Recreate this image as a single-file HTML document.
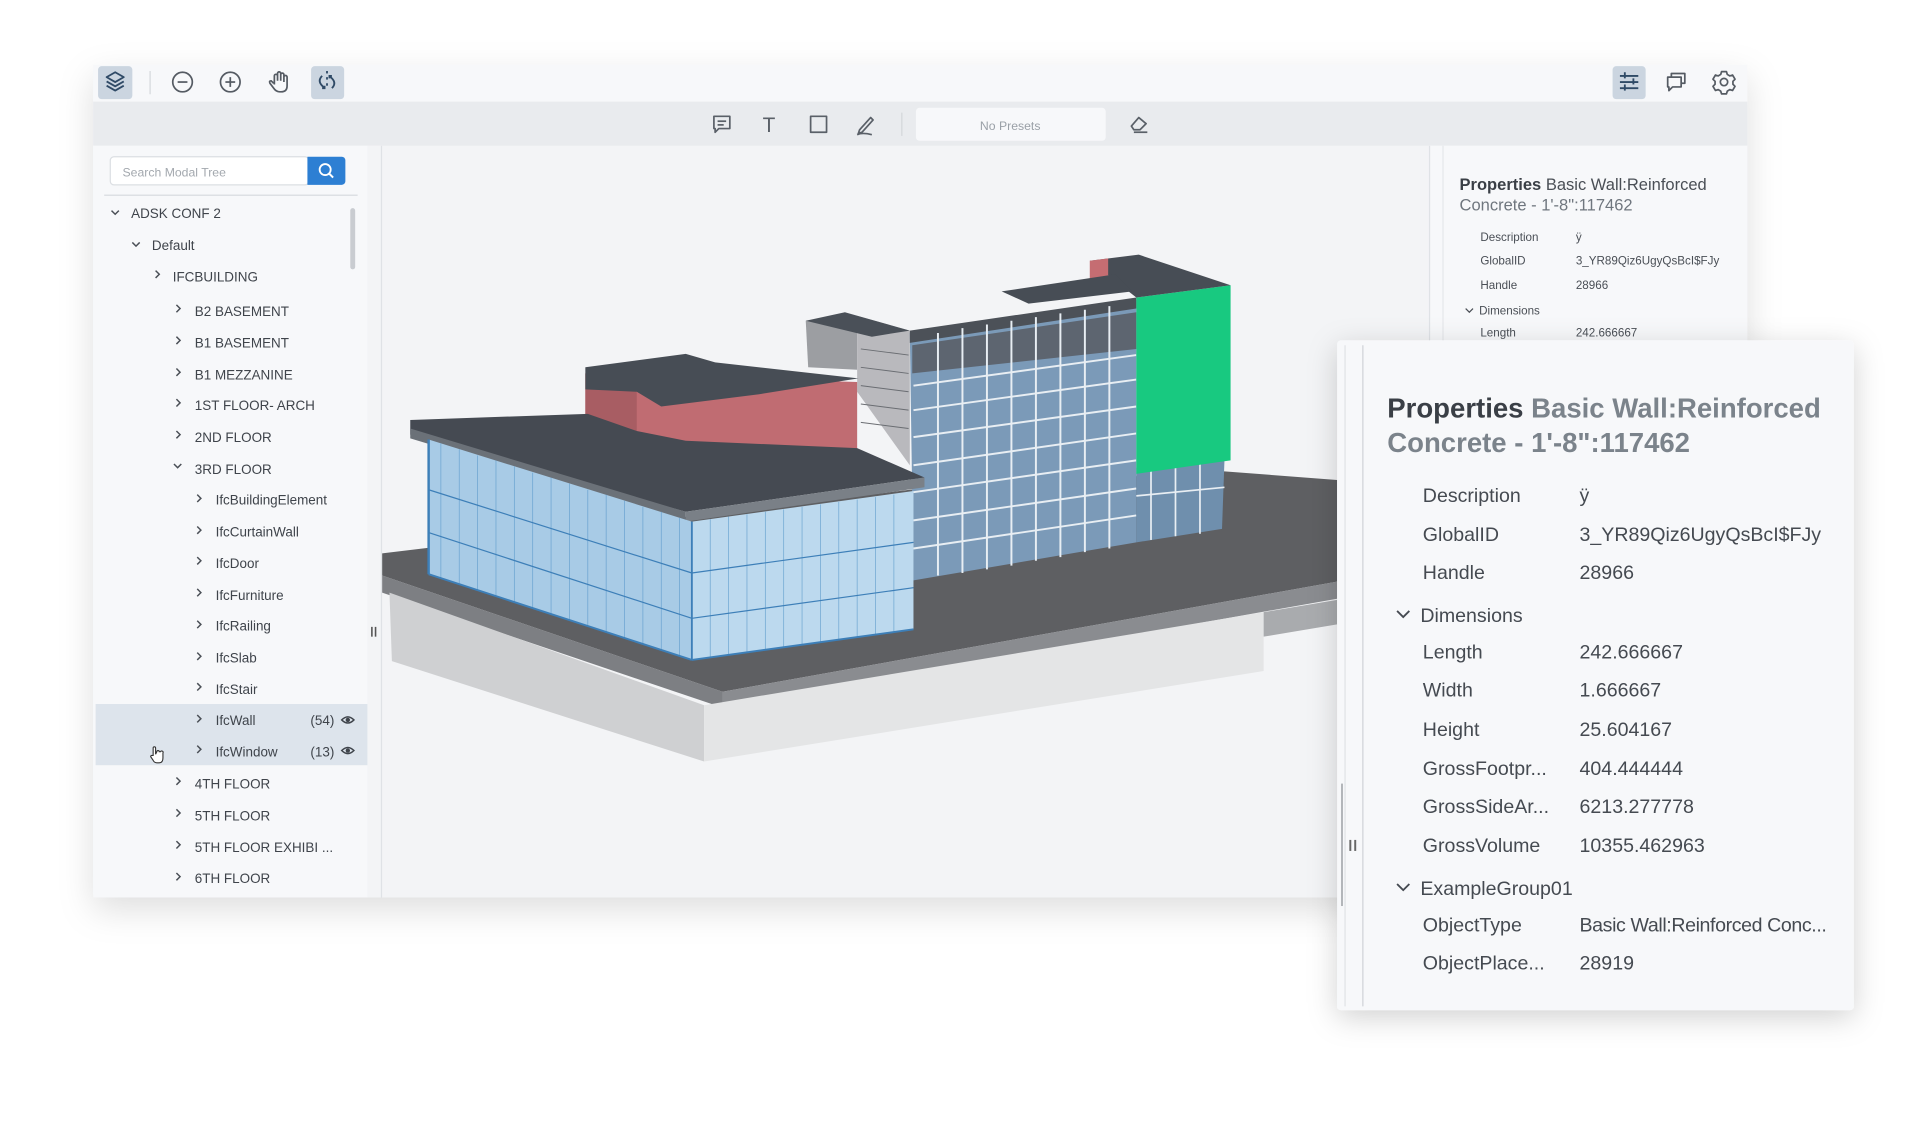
<!DOCTYPE html>
<html><head><meta charset="utf-8"><style>
html,body{margin:0;padding:0;background:#fff;width:1920px;height:1146px;overflow:hidden}
svg{display:block}
text{font-family:"Liberation Sans",sans-serif}
</style></head><body>
<svg width="1920" height="1146" viewBox="0 0 1568 936" xmlns="http://www.w3.org/2000/svg">
<defs>
<filter id="sh" x="-10%" y="-10%" width="120%" height="130%"><feDropShadow dx="0" dy="10" stdDeviation="14" flood-color="#000" flood-opacity="0.13"/></filter>
<filter id="sh2" x="-20%" y="-10%" width="140%" height="130%"><feDropShadow dx="0" dy="6" stdDeviation="12" flood-color="#000" flood-opacity="0.18"/></filter>
<clipPath id="vp"><rect x="312" y="119" width="855" height="614"/></clipPath>
</defs>
<rect width="1568" height="936" fill="#fff"/>
<rect x="76" y="53" width="1351" height="680" rx="4" fill="#f3f4f6" filter="url(#sh)"/>
<rect x="76" y="53" width="1351" height="30" fill="#f7f8fa"/>
<rect x="76" y="83" width="1351" height="36" fill="#e9ebee"/>
<rect x="76" y="119" width="224" height="614" fill="#f7f8fa"/>
<rect x="300" y="119" width="12" height="614" fill="#f3f4f6"/>
<line x1="311.5" y1="119" x2="311.5" y2="733" stroke="#dfe2e6"/>
<rect x="1167" y="119" width="260" height="614" fill="#f7f8fa"/>
<line x1="1167.5" y1="119" x2="1167.5" y2="733" stroke="#dfe2e6"/>
<line x1="1178.5" y1="119" x2="1178.5" y2="733" stroke="#e6e8eb"/>

<rect x="80" y="54" width="28" height="27" rx="3" fill="#cbd5e0"/>
<g fill="none" stroke="#2f4a66" stroke-width="1.5" stroke-linejoin="round">
<path d="M94 59 L101 63 L94 67 L87 63 Z"/><path d="M87 66.5 L94 70.5 L101 66.5"/><path d="M87 70 L94 74 L101 70"/>
</g>
<line x1="122.5" y1="58" x2="122.5" y2="77" stroke="#d5d8dc"/>
<g fill="none" stroke="#555b63" stroke-width="1.4">
<circle cx="149" cy="67" r="8"/><line x1="145" y1="67" x2="153" y2="67"/>
<circle cx="188" cy="67" r="8"/><line x1="184" y1="67" x2="192" y2="67"/><line x1="188" y1="63" x2="188" y2="71"/>
<path d="M224 69 V62 a1.3 1.3 0 0 1 2.6 0 V66 V60 a1.3 1.3 0 0 1 2.6 0 V66 V61 a1.3 1.3 0 0 1 2.6 0 V67 V63 a1.3 1.3 0 0 1 2.6 0 V70 q0 5 -5 5 h-1 q-3 0 -5 -3 l-3 -4 q-1 -2 1 -2 l2 2"/>
</g>
<rect x="254" y="54" width="27" height="27" rx="3" fill="#cbd5e0"/>
<g fill="none" stroke="#2f4a66" stroke-width="1.5">
<path d="M263 62 q-4 4 0 8 l2 2"/><path d="M271 72 q4 -4 0 -8 l-2 -2"/><path d="M263 72 l2 0 0 -2"/><path d="M271 62 l-2 0 0 2"/>
<line x1="267" y1="58" x2="267" y2="60"/><line x1="267" y1="63" x2="267" y2="65"/><line x1="267" y1="68" x2="267" y2="70"/>
</g>
<rect x="1317" y="54" width="27" height="27" rx="3" fill="#cbd5e0"/>
<g stroke="#2f4a66" stroke-width="1.5"><line x1="1323" y1="62" x2="1338" y2="62"/><line x1="1323" y1="67" x2="1338" y2="67"/><line x1="1323" y1="72" x2="1338" y2="72"/><line x1="1327" y1="59" x2="1327" y2="64"/><line x1="1334" y1="64" x2="1334" y2="69"/><line x1="1327" y1="69" x2="1327" y2="74"/></g>
<g fill="none" stroke="#555b63" stroke-width="1.4" stroke-linejoin="round">
<path d="M1362 63 h11 v8 h-7 l-3 3 v-3 h-1 z"/><path d="M1365 63 v-3 h11 v8 h-3"/>
<circle cx="1408" cy="67" r="3"/>
<path d="M1406 58.5 h4 l0.7 2.3 2 1.2 2.3-0.7 2 3.4-1.7 1.7 v2.4 l1.7 1.7-2 3.4-2.3-0.7-2 1.2-0.7 2.3 h-4 l-0.7-2.3-2-1.2-2.3 0.7-2-3.4 1.7-1.7 v-2.4 l-1.7-1.7 2-3.4 2.3 0.7 2-1.2 z"/>
</g>
<g fill="none" stroke="#5a6068" stroke-width="1.4" stroke-linejoin="round">
<path d="M583 95 h13 v10 h-9 l-3 3 v-3 h-1 z"/><line x1="586" y1="99" x2="593" y2="99"/><line x1="586" y1="102" x2="591" y2="102"/>
<rect x="662" y="95" width="13" height="13"/>
<path d="M702 106 l9 -10 l2 2 l-9 10 l-3 1 z"/><path d="M700 110 q4 -2 12 0"/>
<path d="M924 103 l6 -7 l6 5 l-5 5 h-5 z"/><line x1="926" y1="108" x2="937" y2="108"/>
</g>
<text x="628" y="108" font-family="Liberation Serif" font-size="17" fill="#5a6068" text-anchor="middle">T</text>
<line x1="736.5" y1="92" x2="736.5" y2="111" stroke="#d3d6da"/>
<rect x="748" y="88" width="155" height="27" rx="3" fill="#f7f8fa"/>
<text x="825" y="106" font-size="10" fill="#9aa0a7" text-anchor="middle">No Presets</text>

<rect x="90" y="128" width="162" height="23" rx="3" fill="#fff" stroke="#dcdfe3"/>
<text x="100" y="144" font-size="10" fill="#a3a8ae">Search Modal Tree</text>
<path d="M251 128 h28 a3 3 0 0 1 3 3 v17 a3 3 0 0 1 -3 3 h-28 z" fill="#2d7fd3"/>
<circle cx="265.5" cy="138.5" r="4.5" fill="none" stroke="#fff" stroke-width="1.5"/><line x1="268.5" y1="141.5" x2="272" y2="145" stroke="#fff" stroke-width="1.6"/>
<line x1="85" y1="159.5" x2="292" y2="159.5" stroke="#dde0e4" stroke-width="1.2"/>
<rect x="286" y="170" width="4" height="50" rx="2" fill="#c9ccd1"/>
<rect x="78" y="575" width="222" height="50" fill="#dde4ec"/>
<g font-size="11" fill="#3f444b">
<text x="107" y="178">ADSK CONF 2</text>
<text x="124" y="204">Default</text>
<text x="141" y="230">IFCBUILDING</text>
<text x="159" y="258">B2 BASEMENT</text>
<text x="159" y="284">B1 BASEMENT</text>
<text x="159" y="310">B1 MEZZANINE</text>
<text x="159" y="335">1ST FLOOR- ARCH</text>
<text x="159" y="361">2ND FLOOR</text>
<text x="159" y="387">3RD FLOOR</text>
<text x="176" y="412">IfcBuildingElement</text>
<text x="176" y="438">IfcCurtainWall</text>
<text x="176" y="464">IfcDoor</text>
<text x="176" y="490">IfcFurniture</text>
<text x="176" y="515">IfcRailing</text>
<text x="176" y="541">IfcSlab</text>
<text x="176" y="567">IfcStair</text>
<text x="176" y="592">IfcWall</text>
<text x="176" y="618">IfcWindow</text>
<text x="159" y="644">4TH FLOOR</text>
<text x="159" y="670">5TH FLOOR</text>
<text x="159" y="696">5TH FLOOR EXHIBI ...</text>
<text x="159" y="721">6TH FLOOR</text>
<text x="273" y="592" text-anchor="end">(54)</text>
<text x="273" y="618" text-anchor="end">(13)</text>
</g>
<g fill="none" stroke="#4a4f56" stroke-width="1.2">
<path d="M91 172 l3 3 3-3"/><path d="M108 198 l3 3 3-3"/><path d="M142 379 l3 3 3-3"/>
<path d="M127 221 l3 3 -3 3"/>
<path d="M144 249 l3 3 -3 3"/><path d="M144 275 l3 3 -3 3"/><path d="M144 301 l3 3 -3 3"/><path d="M144 326 l3 3 -3 3"/><path d="M144 352 l3 3 -3 3"/>
<path d="M161 404 l3 3 -3 3"/><path d="M161 430 l3 3 -3 3"/><path d="M161 455 l3 3 -3 3"/><path d="M161 481 l3 3 -3 3"/><path d="M161 507 l3 3 -3 3"/><path d="M161 533 l3 3 -3 3"/><path d="M161 558 l3 3 -3 3"/><path d="M161 584 l3 3 -3 3"/><path d="M161 609 l3 3 -3 3"/>
<path d="M144 635 l3 3 -3 3"/><path d="M144 661 l3 3 -3 3"/><path d="M144 687 l3 3 -3 3"/><path d="M144 713 l3 3 -3 3"/>
</g>
<g fill="none" stroke="#3f444b" stroke-width="1.2"><path d="M279 588 q5 -5 10 0 q-5 5 -10 0z"/><path d="M279 613 q5 -5 10 0 q-5 5 -10 0z"/></g>
<circle cx="284" cy="588" r="1.8" fill="#3f444b"/><circle cx="284" cy="613" r="1.8" fill="#3f444b"/>
<path d="M125 617 v-6 a1 1 0 0 1 2 0 v5 l1 -2 a1 1 0 0 1 2 0 l1 0 a1 1 0 0 1 2 1 v4 q0 4 -3 4 h-2 q-2 0 -3 -2 l-2 -3 q0 -1 1 -1z" fill="#fff" stroke="#333" stroke-width="0.9"/>
<g fill="#555"><rect x="303" y="512" width="1.3" height="8"/><rect x="306" y="512" width="1.3" height="8"/></g>

<g clip-path="url(#vp)">
<polygon points="312,452 760,398 1000,385 1092,392 1092,475 590,565 312,470" fill="#5e5f62"/>
<polygon points="312,470 590,565 590,578 312,484" fill="#7d7f83"/>
<polygon points="590,565 1092,475 1092,489 590,578" fill="#8a8c90"/>
<polygon points="318,484 575,576 575,622 320,540" fill="#cfd0d2"/>
<polygon points="575,576 1032,500 1032,548 575,622" fill="#e4e5e6"/>
<polygon points="1032,500 1092,490 1092,510 1032,520" fill="#a9abae"/>
<!-- stair tower -->
<polygon points="658,262 700,258 700,302 660,300" fill="#9c9ea2"/>
<polygon points="700,258 743,270 743,380 700,320" fill="#b9b9bd"/>
<polygon points="658,262 690,255 743,270 712,275" fill="#4a5058"/>
<g stroke="#6a6d72" stroke-width="0.8"><line x1="703" y1="285" x2="742" y2="290"/><line x1="703" y1="300" x2="742" y2="305"/><line x1="703" y1="315" x2="742" y2="320"/><line x1="703" y1="330" x2="742" y2="335"/><line x1="703" y1="345" x2="742" y2="350"/></g>
<!-- tall facade -->
<polygon points="743,272 928,245 928,443 746,474" fill="#7b9ab8"/>
<polygon points="743,270 928,243 928,252 743,280" fill="#4c5158"/>
<polygon points="745,282 928,255 928,285 745,305" fill="#5d6570"/>
<g stroke="#e8eef3" stroke-width="1.6">
<line x1="746" y1="315" x2="928" y2="290"/><line x1="746" y1="335" x2="928" y2="310"/><line x1="746" y1="357" x2="928" y2="332"/><line x1="746" y1="380" x2="928" y2="354"/><line x1="746" y1="402" x2="928" y2="376"/><line x1="746" y1="425" x2="928" y2="399"/><line x1="746" y1="448" x2="928" y2="421"/>
<line x1="766" y1="272" x2="766" y2="470"/><line x1="786" y1="268" x2="786" y2="468"/><line x1="806" y1="265" x2="806" y2="465"/><line x1="826" y1="262" x2="826" y2="462"/><line x1="846" y1="259" x2="846" y2="458"/><line x1="866" y1="256" x2="866" y2="455"/><line x1="886" y1="253" x2="886" y2="451"/><line x1="906" y1="250" x2="906" y2="448"/>
</g>
<polygon points="928,382 1000,376 998,432 928,443" fill="#6f8fad"/>
<g stroke="#e8eef3" stroke-width="1.4"><line x1="940" y1="382" x2="940" y2="441"/><line x1="960" y1="380" x2="960" y2="438"/><line x1="980" y1="378" x2="980" y2="436"/><line x1="928" y1="405" x2="1000" y2="398"/></g>
<polygon points="928,243 1005,233 1005,376 928,387" fill="#18c980"/>
<polygon points="890,213 930,208 1005,233 928,243" fill="#474d55"/>
<polygon points="890,213 905,211 905,235 890,238" fill="#c56d72"/>
<polygon points="818,238 911,224 925,238 840,248" fill="#474d55"/>
<!-- red block -->
<polygon points="478,305 700,312 700,368 540,385 478,365" fill="#c06c72"/>
<polygon points="478,305 520,318 520,372 478,362" fill="#a85d63"/>
<polygon points="478,300 560,289 584,296 701,309 620,322 540,332 520,320 478,318" fill="#474d55"/>
<polygon points="462,368 500,360 528,375 490,384" fill="#6e8aa6"/>
<!-- glass box roof -->
<polygon points="335,343 480,338 520,352 560,360 700,366 755,390 560,418 335,355" fill="#454a52"/>
<polygon points="335,350 560,418 560,426 335,358" fill="#6b7178"/>
<polygon points="560,418 755,390 755,398 560,426" fill="#7a8087"/>
<polygon points="350,359 565,426 565,539 350,469" fill="#a8cbe6"/>
<polygon points="565,426 746,401 746,514 565,539" fill="#bcd9ee"/>
<g stroke="#5d9bcc" stroke-width="0.6" opacity="0.8">
<line x1="360" y1="362" x2="360" y2="472"/><line x1="375" y1="367" x2="375" y2="477"/><line x1="390" y1="372" x2="390" y2="482"/><line x1="405" y1="376" x2="405" y2="487"/><line x1="420" y1="381" x2="420" y2="492"/><line x1="435" y1="386" x2="435" y2="497"/><line x1="450" y1="390" x2="450" y2="502"/><line x1="465" y1="395" x2="465" y2="507"/><line x1="480" y1="400" x2="480" y2="511"/><line x1="495" y1="404" x2="495" y2="516"/><line x1="510" y1="409" x2="510" y2="521"/><line x1="525" y1="414" x2="525" y2="526"/><line x1="540" y1="418" x2="540" y2="531"/><line x1="555" y1="423" x2="555" y2="536"/>
<line x1="580" y1="424" x2="580" y2="537"/><line x1="595" y1="422" x2="595" y2="535"/><line x1="610" y1="420" x2="610" y2="533"/><line x1="625" y1="418" x2="625" y2="531"/><line x1="640" y1="416" x2="640" y2="529"/><line x1="655" y1="414" x2="655" y2="527"/><line x1="670" y1="412" x2="670" y2="525"/><line x1="685" y1="410" x2="685" y2="523"/><line x1="700" y1="408" x2="700" y2="521"/><line x1="715" y1="406" x2="715" y2="518"/><line x1="730" y1="404" x2="730" y2="516"/>
</g>
<g stroke="#3d7fb8" stroke-width="1">
<line x1="350" y1="400" x2="565" y2="468"/><line x1="350" y1="435" x2="565" y2="505"/><line x1="565" y1="468" x2="746" y2="443"/><line x1="565" y1="505" x2="746" y2="480"/>
<line x1="350" y1="359" x2="350" y2="469" stroke-width="2"/><line x1="565" y1="426" x2="565" y2="539" stroke-width="1.5"/>
<line x1="350" y1="469" x2="565" y2="539" stroke-width="1.6"/><line x1="565" y1="539" x2="746" y2="514" stroke-width="1.6"/>
</g>
</g>

<text x="1192" y="155" font-size="13.5" fill="#4a4f56"><tspan font-weight="bold" fill="#3a3f46">Properties</tspan> Basic Wall:Reinforced</text>
<text x="1192" y="172" font-size="13.5" fill="#6f767e">Concrete - 1'-8":117462</text>
<g font-size="9.5" fill="#4a4f56">
<text x="1209" y="197">Description</text><text x="1287" y="197">ÿ</text>
<text x="1209" y="216">GlobalID</text><text x="1287" y="216">3_YR89Qiz6UgyQsBcI$FJy</text>
<text x="1209" y="236">Handle</text><text x="1287" y="236">28966</text>
<text x="1208" y="257">Dimensions</text>
<text x="1209" y="275">Length</text><text x="1287" y="275">242.666667</text>
</g>
<path d="M1197 252 l3 3 3-3" fill="none" stroke="#4a4f56"/>

<rect x="1092" y="278" width="422" height="547" rx="3" fill="#f7f8fa" filter="url(#sh2)"/>
<line x1="1098.5" y1="282" x2="1098.5" y2="822" stroke="#e1e3e6"/>
<line x1="1113" y1="282" x2="1113" y2="822" stroke="#d9dce0" stroke-width="1.3"/>
<line x1="1096" y1="640" x2="1096" y2="740" stroke="#9a9ea3" stroke-width="1.2"/>
<g fill="#666"><rect x="1102" y="686" width="1.6" height="9"/><rect x="1106" y="686" width="1.6" height="9"/></g>
<text x="1133" y="341" font-size="22.5" fill="#7b838b"><tspan font-weight="bold" fill="#3a3f46">Properties</tspan> <tspan font-weight="bold">Basic Wall:Reinforced</tspan></text>
<text x="1133" y="369" font-size="22.5" font-weight="bold" fill="#7b838b">Concrete - 1'-8":117462</text>
<g font-size="16" fill="#454a51">
<text x="1162" y="410">Description</text><text x="1290" y="410">ÿ</text>
<text x="1162" y="442">GlobalID</text><text x="1290" y="442">3_YR89Qiz6UgyQsBcI$FJy</text>
<text x="1162" y="473">Handle</text><text x="1290" y="473">28966</text>
<text x="1160" y="508">Dimensions</text>
<text x="1162" y="538">Length</text><text x="1290" y="538">242.666667</text>
<text x="1162" y="569">Width</text><text x="1290" y="569">1.666667</text>
<text x="1162" y="601">Height</text><text x="1290" y="601">25.604167</text>
<text x="1162" y="633">GrossFootpr...</text><text x="1290" y="633">404.444444</text>
<text x="1162" y="664">GrossSideAr...</text><text x="1290" y="664">6213.277778</text>
<text x="1162" y="696">GrossVolume</text><text x="1290" y="696">10355.462963</text>
<text x="1160" y="731">ExampleGroup01</text>
<text x="1162" y="761">ObjectType</text><text x="1290" y="761" textLength="202">Basic Wall:Reinforced Conc...</text>
<text x="1162" y="792">ObjectPlace...</text><text x="1290" y="792">28919</text>
</g>
<g fill="none" stroke="#454a51" stroke-width="1.5"><path d="M1141 499 l5 5 5-5"/><path d="M1141 722 l5 5 5-5"/></g>
</svg>
</body></html>
